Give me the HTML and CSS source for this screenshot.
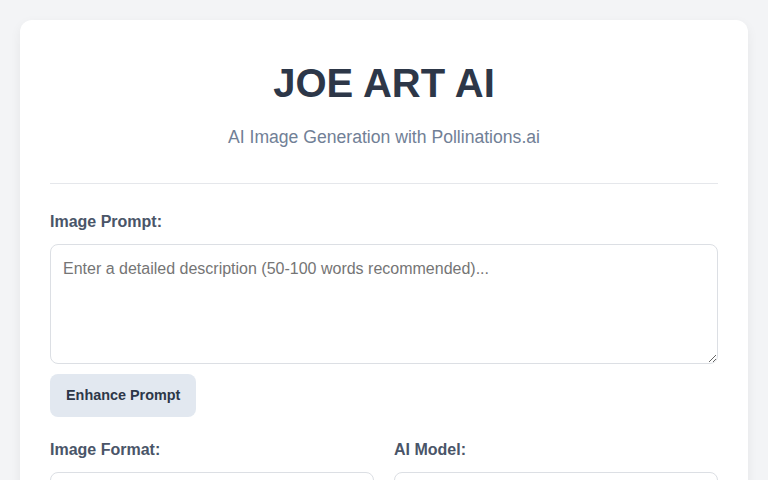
FILE: index.html
```html
<!DOCTYPE html>
<html lang="en">
<head>
<meta charset="utf-8">
<title>JOE ART AI</title>
<link rel="stylesheet" href="styles.css">
</head>
<body>
<main class="card">
  <header class="header">
    <h1 class="title">JOE ART AI</h1>
    <p class="subtitle">AI Image Generation with Pollinations.ai</p>
  </header>
  <section class="field">
    <label class="label" for="prompt">Image Prompt:</label>
    <textarea id="prompt" class="prompt" placeholder="Enter a detailed description (50-100 words recommended)..."></textarea>
    <button class="btn-secondary" type="button">Enhance Prompt</button>
  </section>
  <section class="row">
    <div class="field">
      <label class="label" for="format">Image Format:</label>
      <select id="format" class="select"><option>Square (1:1)</option></select>
    </div>
    <div class="field">
      <label class="label" for="model">AI Model:</label>
      <select id="model" class="select"><option>Flux</option></select>
    </div>
  </section>
</main>
</body>
</html>
```
FILE: styles.css
```css
* { box-sizing: border-box; }
html, body { margin: 0; padding: 0; }
body {
  background: #f3f4f6;
  font-family: "Liberation Sans", Arial, sans-serif;
  color: #2d3748;
  padding: 20px;
}
.card {
  background: #ffffff;
  border-radius: 12px;
  box-shadow: 0 4px 12px rgba(0, 0, 0, 0.06);
  padding: 40px 30px 30px;
  min-height: 600px;
}
.header {
  text-align: center;
  padding-bottom: 35px;
  border-bottom: 1px solid #e5e7eb;
  margin-bottom: 28px;
}
.title {
  margin: 0;
  font-size: 40px;
  font-weight: 700;
  color: #2d3748;
  line-height: 46px;
}
.subtitle {
  margin: 20px 0 0;
  font-size: 17.6px;
  color: #718096;
  line-height: 22px;
}
.field { display: flex; flex-direction: column; align-items: flex-start; }
.label {
  font-size: 16px;
  font-weight: 700;
  color: #4a5568;
  line-height: 20px;
  margin-bottom: 12px;
}
.prompt {
  width: 100%;
  height: 120px;
  border: 1px solid #dcdfe4;
  border-radius: 8px;
  padding: 12px;
  font-family: "Liberation Sans", Arial, sans-serif;
  font-size: 16px;
  line-height: 24px;
  color: #2d3748;
  resize: vertical;
}
.prompt::placeholder { color: #757575; }
.btn-secondary {
  margin-top: 10px;
  background: #e2e8f0;
  border: none;
  border-radius: 8px;
  padding: 13px 16px;
  font-family: "Liberation Sans", Arial, sans-serif;
  font-size: 14.4px;
  font-weight: 700;
  color: #2d3748;
  line-height: 17px;
}
.row {
  margin-top: 23px;
  display: grid;
  grid-template-columns: 1fr 1fr;
  gap: 20px;
}
.row .field { align-items: stretch; }
.select {
  border: 1px solid #dcdfe4;
  border-radius: 8px;
  background: #fff;
  padding: 14px 12px;
  font-family: "Liberation Sans", Arial, sans-serif;
  font-size: 16px;
  line-height: 20px;
  color: #2d3748;
}
```
